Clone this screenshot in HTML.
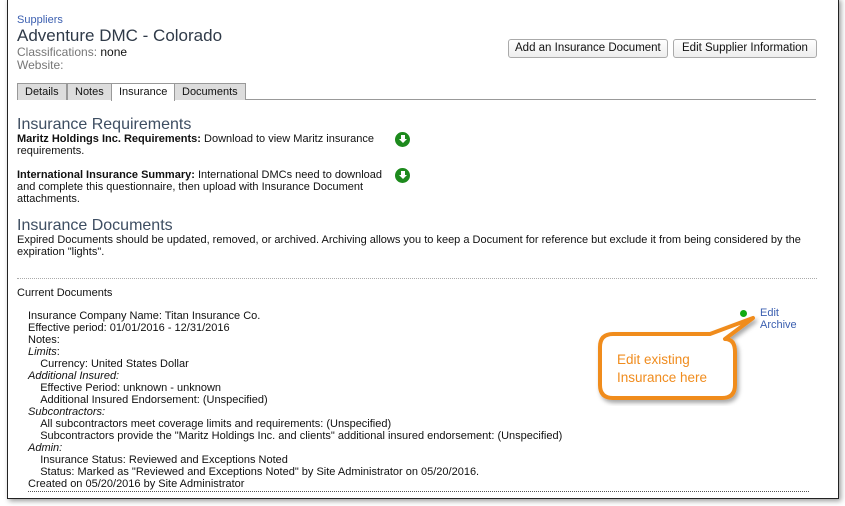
<!DOCTYPE html>
<html><head><meta charset="utf-8"><style>
body{margin:0;width:845px;height:506px;background:#fff;font-family:"Liberation Sans",sans-serif;font-size:11px;color:#111;position:relative;overflow:hidden}
.frame{position:absolute;left:7px;top:-2px;width:830px;height:499px;border:1.5px solid #222;box-shadow:2px 2px 5px rgba(0,0,0,.4);background:#fff}
.a{position:absolute;white-space:nowrap;line-height:12px}
.lnk{color:#3b5fb0}
.gray{color:#777}
h1{position:absolute;margin:0;font-weight:normal;font-size:17px;color:#2f3a48;left:17px;top:26px}
.h2{position:absolute;font-size:16px;color:#3e4e62;left:17px}
.btn{position:absolute;top:39px;height:17px;border:1px solid #aaa;border-radius:3px;background:linear-gradient(#fff,#eee);font-size:11.5px;line-height:17px;padding:0 6px}
.tab{position:absolute;top:83px;height:16px;border:1px solid #999;border-bottom:none;background:#ddd;line-height:16px;padding:0 7px;font-size:11px}
.dl{position:absolute;width:15px;height:15px;border-radius:50%;background:#1d8a1d}
.dl:after{content:"";position:absolute;left:3.5px;border:4px solid transparent;border-top:4px solid #fff;top:7px}
.dl:before{content:"";position:absolute;left:5.5px;top:3px;width:4px;height:4px;background:#fff}
</style></head><body>
<div class="frame"></div>
<div class="a lnk" style="left:17px;top:14px">Suppliers</div>
<h1>Adventure DMC - Colorado</h1>
<div class="a" style="left:17px;top:46px;font-size:12px"><span class="gray">Classifications:</span> none</div>
<div class="a gray" style="left:17px;top:59px;font-size:12px">Website:</div>
<div class="btn" style="left:508px">Add an Insurance Document</div>
<div class="btn" style="left:673px;padding:0 8px">Edit Supplier Information</div>
<div style="position:absolute;left:17px;top:99px;width:799px;border-top:1px solid #999"></div>
<div class="tab" style="left:17px">Details</div>
<div class="tab" style="left:67px">Notes</div>
<div class="tab" style="left:111px;background:#fff;height:17px">Insurance</div>
<div class="tab" style="left:174px">Documents</div>
<div class="h2" style="top:116px">Insurance Requirements</div>
<div class="a" style="left:17px;top:133px"><b>Maritz Holdings Inc. Requirements:</b> Download to view Maritz insurance<br>requirements.</div>
<div class="dl" style="left:395px;top:132px"></div>
<div class="a" style="left:17px;top:169px"><b>International Insurance Summary:</b> International DMCs need to download<br>and complete this questionnaire, then upload with Insurance Document<br>attachments.</div>
<div class="dl" style="left:395px;top:168px"></div>
<div class="h2" style="top:217px">Insurance Documents</div>
<div class="a" style="left:17px;top:234px">Expired Documents should be updated, removed, or archived. Archiving allows you to keep a Document for reference but exclude it from being considered by the<br>expiration "lights".</div>
<div style="position:absolute;left:17px;top:278px;width:800px;border-top:1px dotted #aaa"></div>
<div class="a" style="left:17px;top:287px">Current Documents</div>
<div class="a" style="left:28px;top:310px">Insurance Company Name: Titan Insurance Co.<br>Effective period: 01/01/2016 - 12/31/2016<br>Notes:<br><i>Limits</i>:<br>&nbsp;&nbsp;&nbsp;&nbsp;Currency: United States Dollar<br><i>Additional Insured:</i><br>&nbsp;&nbsp;&nbsp;&nbsp;Effective Period: unknown - unknown<br>&nbsp;&nbsp;&nbsp;&nbsp;Additional Insured Endorsement: (Unspecified)<br><i>Subcontractors:</i><br>&nbsp;&nbsp;&nbsp;&nbsp;All subcontractors meet coverage limits and requirements: (Unspecified)<br>&nbsp;&nbsp;&nbsp;&nbsp;Subcontractors provide the "Maritz Holdings Inc. and clients" additional insured endorsement: (Unspecified)<br><i>Admin:</i><br>&nbsp;&nbsp;&nbsp;&nbsp;Insurance Status: Reviewed and Exceptions Noted<br>&nbsp;&nbsp;&nbsp;&nbsp;Status: Marked as "Reviewed and Exceptions Noted" by Site Administrator on 05/20/2016.<br>Created on 05/20/2016 by Site Administrator</div>
<div style="position:absolute;left:28px;top:491px;width:781px;border-top:1px dotted #555"></div>
<div style="position:absolute;left:740px;top:310px;width:7px;height:7px;border-radius:50%;background:#1a1"></div>
<div class="a lnk" style="left:760px;top:307px">Edit<br>Archive</div>
<svg style="position:absolute;left:595px;top:312px" width="165" height="95">
<defs><filter id="s"><feDropShadow dx="2" dy="3" stdDeviation="2" flood-opacity=".35"/></filter></defs>
<path d="M18 22 H115 L158 6 L130 27 Q140 27 140 40 V73 Q140 86 127 86 H18 Q5 86 5 73 V35 Q5 22 18 22Z" fill="#fff" stroke="#f08c1e" stroke-width="4" stroke-linejoin="round" filter="url(#s)"/>
<text x="22" y="52" font-family="Liberation Sans" font-size="13.5" fill="#f08c1e">Edit existing</text>
<text x="22" y="70" font-family="Liberation Sans" font-size="13.5" fill="#f08c1e">Insurance here</text>
</svg>
</body></html>
